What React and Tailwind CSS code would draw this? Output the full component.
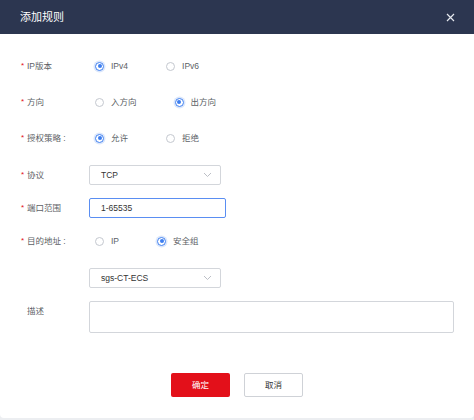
import React, { useState } from "react";

const font = { fontFamily: '"Liberation Sans", "Noto Sans CJK SC", sans-serif' };

function Radio({ checked, label, onClick }) {
  return (
    <button type="button" onClick={onClick} className="flex items-center gap-[7px] text-[8.5px] leading-[9px] text-[#5c5f66]">
      <span
        className={
          "flex h-[9px] w-[9px] items-center justify-center rounded-full border " +
          (checked ? "border-[#3d7ef0] shadow-[0_0_0_1.5px_#dbe7fb]" : "border-[#c4c8cf]")
        }
      >
        {checked && <span className="h-[4px] w-[4px] rounded-full bg-[#3d7ef0]" />}
      </span>
      <span className="pt-[1px]">{label}</span>
    </button>
  );
}

function RadioGroup({ options, value, onChange }) {
  return (
    <div className="flex h-[20px] items-center gap-[38px] pl-[6px]">
      {options.map((o) => (
        <Radio key={o} label={o} checked={value === o} onClick={() => onChange(o)} />
      ))}
    </div>
  );
}

function Label({ text, required = true }) {
  return (
    <div className="flex w-[69px] shrink-0 items-center text-[8.5px] text-[#5c5f66]">
      <span className={"w-[7px] pl-[1px] text-[8px] " + (required ? "text-[#e3101a]" : "text-transparent")}>*</span>
      <span>{text}</span>
    </div>
  );
}

function Select({ value }) {
  return (
    <div className="flex h-[20px] w-[132px] items-center justify-between rounded-[2px] border border-[#d3d6db] pl-[11px] pr-[8px] text-[8.5px] text-[#333]">
      <span>{value}</span>
      <svg width="9" height="6" viewBox="0 0 9 6" fill="none">
        <path d="M1 1l3.5 3.5L8 1" stroke="#b4b8bf" strokeWidth="0.9" />
      </svg>
    </div>
  );
}

export default function App() {
  const [ipVer, setIpVer] = useState("IPv4");
  const [dir, setDir] = useState("出方向");
  const [policy, setPolicy] = useState("允许");
  const [dest, setDest] = useState("安全组");

  return (
    <div className="h-[420px] w-[474px] bg-[#eceef1]" style={font}>
      <div className="flex h-[418px] flex-col rounded-b-[4px] bg-white">
        <div className="flex h-[34px] items-center justify-between bg-[#2c3650] px-[20px]">
          <span className="text-[11px] text-white">添加规则</span>
          <svg width="9" height="9" viewBox="0 0 9 9" className="mr-[-1px]">
            <path d="M1 1l7 7M8 1L1 8" stroke="#e6e9ef" strokeWidth="1.2" />
          </svg>
        </div>

        <div className="flex flex-col px-[20px] pt-[22px]">
          <div className="flex items-center">
            <Label text="IP版本" />
            <RadioGroup options={["IPv4", "IPv6"]} value={ipVer} onChange={setIpVer} />
          </div>
          <div className="mt-[16px] flex items-center">
            <Label text="方向" />
            <RadioGroup options={["入方向", "出方向"]} value={dir} onChange={setDir} />
          </div>
          <div className="mt-[16px] flex items-center">
            <Label text="授权策略 :" />
            <RadioGroup options={["允许", "拒绝"]} value={policy} onChange={setPolicy} />
          </div>
          <div className="mt-[17px] flex items-center">
            <Label text="协议" />
            <Select value="TCP" />
          </div>
          <div className="mt-[13px] flex items-center">
            <Label text="端口范围" />
            <input
              defaultValue="1-65535"
              className="h-[20px] w-[137px] rounded-[2px] border border-[#5a8ef2] pl-[11px] text-[8.5px] text-[#333] outline-none"
            />
          </div>
          <div className="mt-[13px] flex items-center">
            <Label text="目的地址 :" />
            <RadioGroup options={["IP", "安全组"]} value={dest} onChange={setDest} />
          </div>
          <div className="mt-[17px] flex items-center">
            <Label text="" required={false} />
            <Select value="sgs-CT-ECS" />
          </div>
          <div className="mt-[13px] flex items-start">
            <div className="pt-[4px]">
              <Label text="描述" required={false} />
            </div>
            <textarea className="h-[32px] flex-1 resize-none rounded-[2px] border border-[#d3d6db] outline-none" />
          </div>
        </div>

        <div className="mt-[40px] flex justify-center gap-[14px]">
          <button className="h-[24px] w-[59px] rounded-[2px] bg-[#e3101a] text-[8.5px] text-white">确定</button>
          <button className="h-[24px] w-[59px] rounded-[2px] border border-[#cfd2d7] bg-white text-[8.5px] text-[#333]">取消</button>
        </div>
      </div>
    </div>
  );
}
